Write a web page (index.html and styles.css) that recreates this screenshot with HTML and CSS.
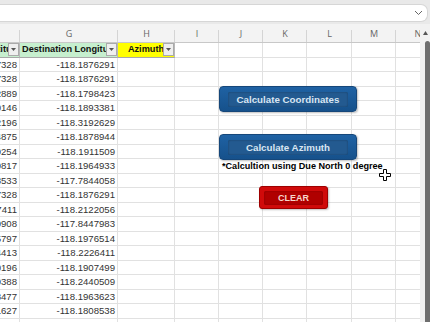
FILE: index.html
```html
<!DOCTYPE html>
<html>
<head>
    <title>Azimuth</title>
    <link rel="stylesheet" href="styles.css">
</head>
<body>
    <div class="top-strip"></div>
    <div class="formula-bar">
        <svg width="9" height="6" viewBox="0 0 9 6"><path d="M1 1 L4.5 4.5 L8 1" fill="none" stroke="#666" stroke-width="1"/></svg>
    </div>
    <div class="strip-gap"></div>

    <div class="sheet">
        <div class="grid">
            <div class="row col-head">
                <div class="ch">F</div><div class="ch">G</div><div class="ch">H</div><div class="ch">I</div><div class="ch">J</div><div class="ch">K</div><div class="ch">L</div><div class="ch">M</div><div class="ch">N</div>
            </div>
            <div class="row">
                <div class="th green"><span class="th-text">Destination Latitude</span><span class="filter"><svg width="5" height="3" viewBox="0 0 5 3"><path d="M0 0 H5 L2.5 3 Z" fill="#555"/></svg></span></div>
                <div class="th green"><span class="th-text">Destination Longitude</span><span class="filter"><svg width="5" height="3" viewBox="0 0 5 3"><path d="M0 0 H5 L2.5 3 Z" fill="#555"/></svg></span></div>
                <div class="th yellow"><span class="th-text">Azimuth</span><span class="filter"><svg width="5" height="3" viewBox="0 0 5 3"><path d="M0 0 H5 L2.5 3 Z" fill="#555"/></svg></span></div>
                <div class="c"></div><div class="c"></div><div class="c"></div><div class="c"></div><div class="c"></div><div class="c"></div>
            </div>
            <div class="row"><div class="c">33.9197328</div><div class="c">-118.1876291</div><div class="c"></div><div class="c"></div><div class="c"></div><div class="c"></div><div class="c"></div><div class="c"></div><div class="c"></div></div>
            <div class="row"><div class="c">33.9197328</div><div class="c">-118.1876291</div><div class="c"></div><div class="c"></div><div class="c"></div><div class="c"></div><div class="c"></div><div class="c"></div><div class="c"></div></div>
            <div class="row"><div class="c">33.9012889</div><div class="c">-118.1798423</div><div class="c"></div><div class="c"></div><div class="c"></div><div class="c"></div><div class="c"></div><div class="c"></div><div class="c"></div></div>
            <div class="row"><div class="c">33.8870146</div><div class="c">-118.1893381</div><div class="c"></div><div class="c"></div><div class="c"></div><div class="c"></div><div class="c"></div><div class="c"></div><div class="c"></div></div>
            <div class="row"><div class="c">34.0292196</div><div class="c">-118.3192629</div><div class="c"></div><div class="c"></div><div class="c"></div><div class="c"></div><div class="c"></div><div class="c"></div><div class="c"></div></div>
            <div class="row"><div class="c">33.9054875</div><div class="c">-118.1878944</div><div class="c"></div><div class="c"></div><div class="c"></div><div class="c"></div><div class="c"></div><div class="c"></div><div class="c"></div></div>
            <div class="row"><div class="c">33.8729254</div><div class="c">-118.1911509</div><div class="c"></div><div class="c"></div><div class="c"></div><div class="c"></div><div class="c"></div><div class="c"></div><div class="c"></div></div>
            <div class="row"><div class="c">33.8599817</div><div class="c">-118.1964933</div><div class="c"></div><div class="c"></div><div class="c"></div><div class="c"></div><div class="c"></div><div class="c"></div><div class="c"></div></div>
            <div class="row"><div class="c">33.6848533</div><div class="c">-117.7844058</div><div class="c"></div><div class="c"></div><div class="c"></div><div class="c"></div><div class="c"></div><div class="c"></div><div class="c"></div></div>
            <div class="row"><div class="c">33.9197328</div><div class="c">-118.1876291</div><div class="c"></div><div class="c"></div><div class="c"></div><div class="c"></div><div class="c"></div><div class="c"></div><div class="c"></div></div>
            <div class="row"><div class="c">33.8947411</div><div class="c">-118.2122056</div><div class="c"></div><div class="c"></div><div class="c"></div><div class="c"></div><div class="c"></div><div class="c"></div><div class="c"></div></div>
            <div class="row"><div class="c">33.6939908</div><div class="c">-117.8447983</div><div class="c"></div><div class="c"></div><div class="c"></div><div class="c"></div><div class="c"></div><div class="c"></div><div class="c"></div></div>
            <div class="row"><div class="c">33.8795797</div><div class="c">-118.1976514</div><div class="c"></div><div class="c"></div><div class="c"></div><div class="c"></div><div class="c"></div><div class="c"></div><div class="c"></div></div>
            <div class="row"><div class="c">33.9164413</div><div class="c">-118.2226411</div><div class="c"></div><div class="c"></div><div class="c"></div><div class="c"></div><div class="c"></div><div class="c"></div><div class="c"></div></div>
            <div class="row"><div class="c">33.8830196</div><div class="c">-118.1907499</div><div class="c"></div><div class="c"></div><div class="c"></div><div class="c"></div><div class="c"></div><div class="c"></div><div class="c"></div></div>
            <div class="row"><div class="c">33.8449388</div><div class="c">-118.2440509</div><div class="c"></div><div class="c"></div><div class="c"></div><div class="c"></div><div class="c"></div><div class="c"></div><div class="c"></div></div>
            <div class="row"><div class="c">33.8678477</div><div class="c">-118.1963623</div><div class="c"></div><div class="c"></div><div class="c"></div><div class="c"></div><div class="c"></div><div class="c"></div><div class="c"></div></div>
            <div class="row"><div class="c">33.9131627</div><div class="c">-118.1808538</div><div class="c"></div><div class="c"></div><div class="c"></div><div class="c"></div><div class="c"></div><div class="c"></div><div class="c"></div></div>
            <div class="row"><div class="c"></div><div class="c"></div><div class="c"></div><div class="c"></div><div class="c"></div><div class="c"></div><div class="c"></div><div class="c"></div><div class="c"></div></div>
        </div>
        <div class="vscroll">
            <div class="up-arrow"><svg width="5" height="4" viewBox="0 0 5 4"><path d="M0 4 H5 L2.5 0 Z" fill="#555"/></svg></div>
            <div class="thumb"></div>
        </div>
    </div>

    <!-- shapes floating over the sheet -->
    <div class="btn btn-blue coords"><div class="btn-face">Calculate Coordinates</div></div>
    <div class="btn btn-blue azimuth"><div class="btn-face">Calculate Azimuth</div></div>
    <div class="note">*Calcultion using Due North 0 degree</div>
    <div class="btn btn-red"><div class="btn-face">CLEAR</div></div>

    <svg class="cursor" width="12" height="12" viewBox="0 0 12 12">
        <path d="M4.5 0.5 H7.5 V4.5 H11.5 V7.5 H7.5 V11.5 H4.5 V7.5 H0.5 V4.5 H4.5 Z" fill="#fff" stroke="#000" stroke-width="1"/>
    </svg>
</body>
</html>
```

FILE: styles.css
```css
body {
    margin: 0;
    width: 430px;
    height: 322px;
    overflow: hidden;
    background: #e9e9e9;
    font-family: "Liberation Sans", Arial, sans-serif;
    display: flex;
    flex-direction: column;
}

.top-strip {
    height: 4px;
    flex: none;
}

.formula-bar {
    height: 18px;
    flex: none;
    box-sizing: border-box;
    margin-right: 2px;
    background: #fff;
    border: 1px solid #d6d6d6;
    border-left: none;
    border-radius: 0 7px 7px 0;
    display: flex;
    align-items: center;
    justify-content: flex-end;
    padding-right: 4px;
}

.strip-gap {
    height: 2px;
    flex: none;
}

.sheet {
    flex: 1;
    min-height: 0;
    display: flex;
    background: #fff;
}

.grid {
    width: 420px;
    overflow: hidden;
}

.row {
    display: grid;
    grid-template-columns: 88px 98px 57px 44px 44px 44px 45px 44px 44px;
    width: 508px;
    height: 14.5px;
    margin-left: -68px;
}

.col-head {
    height: 19px;
    box-sizing: border-box;
    background: #f3f3f3;
    border-bottom: 1px solid #c8c8c8;
}

.ch {
    text-align: center;
    font-family: "Open Sans", sans-serif;
    font-size: 9px;
    color: #666;
    line-height: 16px;
    padding-top: 2px;
    background: linear-gradient(#d4d4d4, #d4d4d4) right bottom / 1px 12px no-repeat;
}

.c {
    box-sizing: border-box;
    border-right: 1px solid #e1e1e1;
    border-bottom: 1px solid #e1e1e1;
    padding-right: 2px;
    font-size: 9.6px;
    color: #333;
    line-height: 13.5px;
    text-align: right;
    white-space: nowrap;
    overflow: hidden;
}

.th {
    position: relative;
    box-sizing: border-box;
    border-right: 1px solid #b8b8b8;
    border-bottom: 1px solid #a8a8a8;
    font-size: 9.2px;
    font-weight: bold;
    color: #111;
    line-height: 13.5px;
    white-space: nowrap;
    overflow: hidden;
}

.th-text {
    display: block;
    padding-left: 2px;
}

.green {
    background: #c6efce;
}

.yellow {
    background: #ffff00;
}

.yellow .th-text {
    text-align: center;
    padding-left: 0;
}

.filter {
    position: absolute;
    right: 0;
    top: 0;
    width: 11px;
    height: 13px;
    box-sizing: border-box;
    background: #efefef;
    border: 1px solid #aaa;
    display: flex;
    align-items: center;
    justify-content: center;
}

.vscroll {
    width: 10px;
    background: #f1f1f1;
    display: flex;
    flex-direction: column;
    align-items: flex-end;
}

.up-arrow {
    height: 17px;
    align-self: center;
    display: flex;
    align-items: center;
}

.thumb {
    flex: 1;
    width: 5px;
    background: #6e6e6e;
    border-radius: 3px 3px 0 0;
}

.btn {
    position: absolute;
    box-sizing: border-box;
    display: flex;
    align-items: center;
    justify-content: center;
    border-radius: 4px;
    font-weight: bold;
}

.btn-face {
    display: flex;
    align-items: center;
    justify-content: center;
    border-radius: 2px;
}

.btn-blue {
    left: 219px;
    width: 138px;
    height: 26px;
    background: linear-gradient(#1f62a4, #16518b);
    border: 1px solid #16477a;
    box-shadow: 1px 1px 2px rgba(0, 0, 0, 0.25);
}

.btn-blue .btn-face {
    width: 120px;
    height: 15px;
    background: #235a90;
    box-shadow: inset 0 0 2px rgba(0, 0, 0, 0.35);
    font-size: 9.75px;
    color: #d9e6f3;
}

.coords {
    top: 86px;
}

.azimuth {
    top: 134px;
}

.note {
    position: absolute;
    left: 222px;
    top: 161px;
    font-size: 9.1px;
    font-weight: bold;
    line-height: 11px;
    color: #000;
}

.btn-red {
    left: 259px;
    top: 186px;
    width: 69px;
    height: 23px;
    border-radius: 3px;
    background: #d00a0a;
    border: 1px solid #9e0000;
    box-shadow: 1px 1px 2px rgba(0, 0, 0, 0.25);
}

.btn-red .btn-face {
    width: 59px;
    height: 14px;
    background: #b00000;
    box-shadow: inset 0 0 2px rgba(0, 0, 0, 0.3);
    font-size: 9px;
    color: #f6d6cc;
}

.cursor {
    position: absolute;
    left: 379px;
    top: 169px;
}
```
